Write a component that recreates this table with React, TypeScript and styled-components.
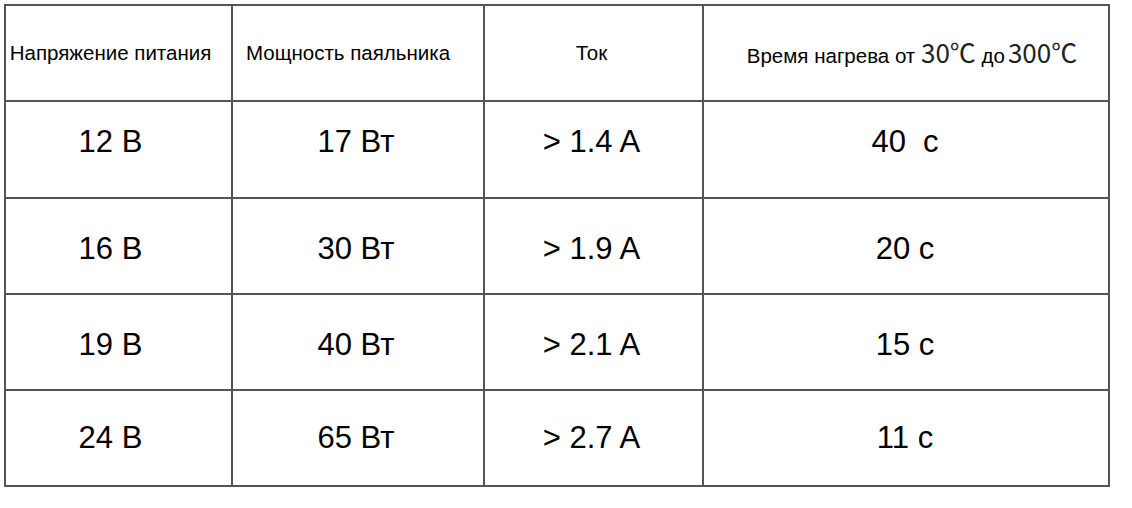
import styled, { createGlobalStyle } from "styled-components";

const GlobalStyle = createGlobalStyle`
    html, body {
        margin: 0;
        padding: 0;
        background: #ffffff;
    }
`;

const Page = styled.div`
    padding: 4px;
    width: 1132px;
    height: 508px;
    box-sizing: border-box;
`;

const Table = styled.table`
    border-collapse: collapse;
    font-family: "Liberation Sans", Arial, sans-serif;
    color: #000;
`;

// $dx / $dy nudge the text off the cell centre, as in the original sheet
const Cell = styled.td<{ $w?: number; $h: number; $size: number; $dx?: number; $dy?: number }>`
    border: 2px solid #555;
    text-align: center;
    vertical-align: middle;
    padding: ${(p) => {
        const dx = p.$dx ?? 0;
        const dy = p.$dy ?? 0;
        return `${Math.max(dy, 0) * 2}px ${Math.max(-dx, 0) * 2}px ${Math.max(-dy, 0) * 2}px ${Math.max(dx, 0) * 2}px`;
    }};
    box-sizing: border-box;
    width: ${(p) => (p.$w ? `${p.$w}px` : "auto")};
    height: ${(p) => p.$h}px;
    font-size: ${(p) => p.$size}px;
    white-space: nowrap;
`;

const Degrees = styled.span<{ $gap?: number }>`
    font-family: "Noto Sans CJK SC", "Liberation Sans", sans-serif;
    font-size: 26px;
    color: #222;
    margin-left: ${(p) => p.$gap ?? 0}px;
`;

const widths = [227, 252, 219, 406];
const heights = [97, 96, 96, 96];
const rowDy = [-8, 3, 3, 0];
const colDx = [-8, -2, -2, -1];

const rows = [
    ["12 В", "17 Вт", "> 1.4 A", "40\u00a0 с"],
    ["16 В", "30 Вт", "> 1.9 A", "20 с"],
    ["19 В", "40 Вт", "> 2.1 A", "15 с"],
    ["24 В", "65 Вт", "> 2.7 A", "11 с"],
];

const App = () => {
    return (
        <Page>
            <GlobalStyle />
            <Table>
                <tbody>
                    <tr>
                        <Cell $w={widths[0]} $h={96} $size={20.5} $dx={-8}>Напряжение питания</Cell>
                        <Cell $w={widths[1]} $h={96} $size={20.5} $dx={-10}>Мощность паяльника</Cell>
                        <Cell $w={widths[2]} $h={96} $size={20.5} $dx={-2}>Ток</Cell>
                        <Cell $w={widths[3]} $h={96} $size={20.5} $dx={6} $dy={-2}>
                            Время нагрева от <Degrees>30℃</Degrees> до<Degrees $gap={3}>300℃</Degrees>
                        </Cell>
                    </tr>
                    {rows.map((r, i) => (
                        <tr key={i}>
                            {r.map((c, j) => (
                                <Cell key={j} $h={heights[i]} $size={31} $dx={colDx[j]} $dy={rowDy[i]}>
                                    {c}
                                </Cell>
                            ))}
                        </tr>
                    ))}
                </tbody>
            </Table>
        </Page>
    );
};

export default App;
